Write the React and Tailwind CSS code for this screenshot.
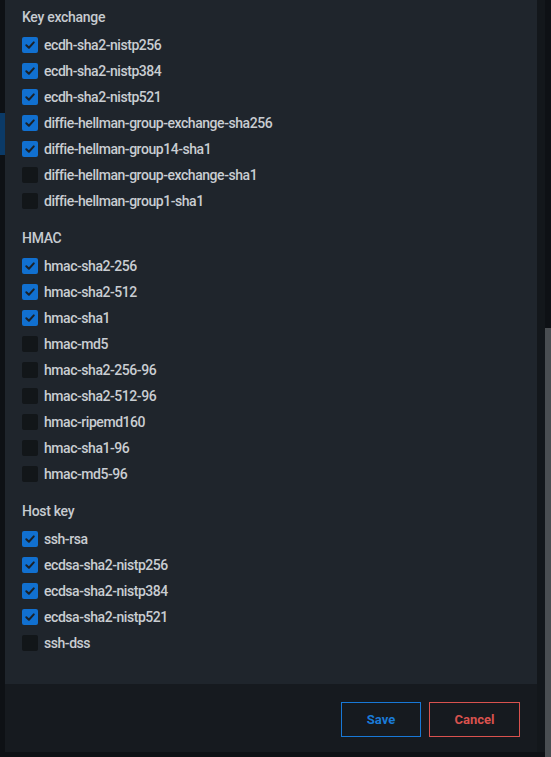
const SECTIONS = [
  {
    title: "Key exchange",
    items: [
      ["ecdh-sha2-nistp256", true],
      ["ecdh-sha2-nistp384", true],
      ["ecdh-sha2-nistp521", true],
      ["diffie-hellman-group-exchange-sha256", true],
      ["diffie-hellman-group14-sha1", true],
      ["diffie-hellman-group-exchange-sha1", false],
      ["diffie-hellman-group1-sha1", false],
    ],
  },
  {
    title: "HMAC",
    items: [
      ["hmac-sha2-256", true],
      ["hmac-sha2-512", true],
      ["hmac-sha1", true],
      ["hmac-md5", false],
      ["hmac-sha2-256-96", false],
      ["hmac-sha2-512-96", false],
      ["hmac-ripemd160", false],
      ["hmac-sha1-96", false],
      ["hmac-md5-96", false],
    ],
  },
  {
    title: "Host key",
    items: [
      ["ssh-rsa", true],
      ["ecdsa-sha2-nistp256", true],
      ["ecdsa-sha2-nistp384", true],
      ["ecdsa-sha2-nistp521", true],
      ["ssh-dss", false],
    ],
  },
];

function Check({ checked }) {
  if (!checked) return <span className="w-4 h-4 rounded-[2px] bg-[#121619] shrink-0" />;
  return (
    <span className="w-4 h-4 rounded-[2px] bg-[#1170d0] shrink-0 flex items-center justify-center">
      <svg width="12" height="12" viewBox="0 0 12 12" fill="none">
        <path d="M2.3 6.2 L4.9 8.7 L9.8 3.4" stroke="#1b2127" strokeWidth="2" strokeLinecap="round" strokeLinejoin="round" />
      </svg>
    </span>
  );
}

export default function App() {
  return (
    <div className="w-[551px] h-[757px] bg-[#0e1115] flex overflow-hidden" style={{ fontFamily: 'Roboto, "Noto Sans", sans-serif' }}>
      {/* left strip with highlighted nav item */}
      <div className="w-[5px] flex flex-col">
        <div className="h-[113px]" />
        <div className="h-[42px] bg-[#0b3a67]" />
      </div>

      {/* dialog */}
      <div className="w-[532px] h-[752px] flex flex-col">
        <div className="flex-1 bg-[#1f252c] pl-[17px] pt-[7px]">
          {SECTIONS.map((s) => (
            <div key={s.title} className="mb-[14px]">
              <div className="h-5 leading-5 text-[14px] tracking-[-0.3px] font-medium text-[#c6cbd0] mb-[5px]">{s.title}</div>
              {s.items.map(([name, checked]) => (
                <div key={name} className="h-[26px] flex items-center gap-[6px]">
                  <Check checked={checked} />
                  <span className="text-[14px] tracking-[-0.45px] font-medium text-[#c9cdd2]">{name}</span>
                </div>
              ))}
            </div>
          ))}
        </div>
        <div className="h-[68px] shrink-0 bg-[#161a1f] flex items-start justify-end gap-2 pr-[17px] pt-[18px]">
          <button className="w-20 h-[35px] border border-[#1878d6] text-[#1a7bd8] text-[13px] font-bold">Save</button>
          <button className="w-[91px] h-[35px] border border-[#d9524e] text-[#d9524e] text-[13px] font-bold">Cancel</button>
        </div>
      </div>

      {/* right gutter + scrollbar */}
      <div className="w-[8px] h-[752px] bg-[#13171b]" />
      <div className="w-[6px] flex flex-col">
        <div className="h-[328px]" />
        <div className="flex-1 bg-[#4a4e52]" />
      </div>
    </div>
  );
}
